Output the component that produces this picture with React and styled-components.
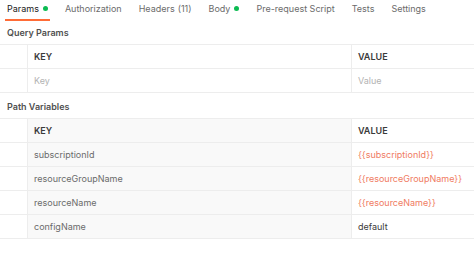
import React from "react";
import styled, { createGlobalStyle } from "styled-components";

const GlobalStyle = createGlobalStyle`
  html, body {
    margin: 0;
    padding: 0;
    background: #ffffff;
    font-family: Inter, "Noto Sans", "Liberation Sans", sans-serif;
    overflow: hidden;
  }
`;

const tabs = [
  { label: "Params", active: true, dot: true },
  { label: "Authorization" },
  { label: "Headers", count: "(11)" },
  { label: "Body", dot: true },
  { label: "Pre-request Script" },
  { label: "Tests" },
  { label: "Settings" },
];

const queryParams = [{ key: "Key", value: "Value", placeholder: true }];

const pathVariables = [
  { key: "subscriptionId", value: "{{subscriptionId}}", variable: true },
  { key: "resourceGroupName", value: "{{resourceGroupName}}", variable: true },
  { key: "resourceName", value: "{{resourceName}}", variable: true },
  { key: "configName", value: "default" },
];

export default function App() {
  return (
    <Page>
      <GlobalStyle />
      <TabBar>
        {tabs.map((t) => (
          <Tab key={t.label} $active={t.active}>
            {t.label}
            {t.count && <Count>{t.count}</Count>}
            {t.dot && <Dot />}
          </Tab>
        ))}
      </TabBar>

      <SectionTitle>Query Params</SectionTitle>
      <Table>
        <Row>
          <CheckCell />
          <KeyCell $header>KEY</KeyCell>
          <ValueCell $header>VALUE</ValueCell>
        </Row>
        {queryParams.map((p) => (
          <Row key={p.key}>
            <CheckCell />
            <KeyCell $muted={p.placeholder}>{p.key}</KeyCell>
            <ValueCell $muted={p.placeholder}>{p.value}</ValueCell>
          </Row>
        ))}
      </Table>

      <SectionTitle $gap>Path Variables</SectionTitle>
      <Table>
        <Row>
          <CheckCell />
          <KeyCell $header $readonly>
            KEY
          </KeyCell>
          <ValueCell $header>VALUE</ValueCell>
        </Row>
        {pathVariables.map((p) => (
          <Row key={p.key}>
            <CheckCell />
            <KeyCell $readonly>{p.key}</KeyCell>
            <ValueCell $variable={p.variable}>{p.value}</ValueCell>
          </Row>
        ))}
      </Table>
    </Page>
  );
}

const Page = styled.div`
  width: 474px;
  height: 253px;
  background: #fff;
`;

const TabBar = styled.div`
  display: flex;
  align-items: stretch;
  height: 21px;
  padding-left: 5px;
`;

const Tab = styled.div`
  display: flex;
  align-items: center;
  gap: 3px;
  font-size: 9px;
  color: ${(p) => (p.$active ? "#212121" : "#6b6b6b")};
  margin-right: 13px;
  padding: 0 2px 3px;
  box-sizing: border-box;
  border-bottom: 2px solid ${(p) => (p.$active ? "#ff6c37" : "transparent")};
  white-space: nowrap;
`;

const Count = styled.span`
  color: #6b6b6b;
`;

const Dot = styled.span`
  width: 5px;
  height: 5px;
  border-radius: 50%;
  background: #0cbb52;
  margin-left: 1px;
`;

const SectionTitle = styled.div`
  font-size: 9px;
  font-weight: 600;
  color: #505050;
  padding-left: 7px;
  height: 23px;
  display: flex;
  align-items: center;
  margin-top: ${(p) => (p.$gap ? "2px" : "0")};
`;

const Table = styled.div`
  border-top: 1px solid #ededed;
`;

const Row = styled.div`
  display: grid;
  grid-template-columns: 28px 324px 1fr;
  height: 24px;
  box-sizing: border-box;
  border-bottom: 1px solid #ededed;
`;

const CheckCell = styled.div`
  border-right: 1px solid #ededed;
`;

const Cell = styled.div`
  display: flex;
  align-items: center;
  font-size: 9px;
  white-space: nowrap;
  overflow: hidden;
  font-weight: ${(p) => (p.$header ? 600 : 400)};
  color: ${(p) =>
    p.$header ? "#3a3a3a" : p.$muted ? "#b3b3b3" : p.$variable ? "#f07b62" : "#3a3a3a"};
`;

const KeyCell = styled(Cell)`
  padding-left: 6px;
  border-right: 1px solid #ededed;
  background: ${(p) => (p.$readonly ? "#f9f9f9" : "transparent")};
  color: ${(p) =>
    p.$header ? "#3a3a3a" : p.$muted ? "#b3b3b3" : p.$readonly ? "#6b6b6b" : "#3a3a3a"};
`;

const ValueCell = styled(Cell)`
  padding-left: 6px;
`;
